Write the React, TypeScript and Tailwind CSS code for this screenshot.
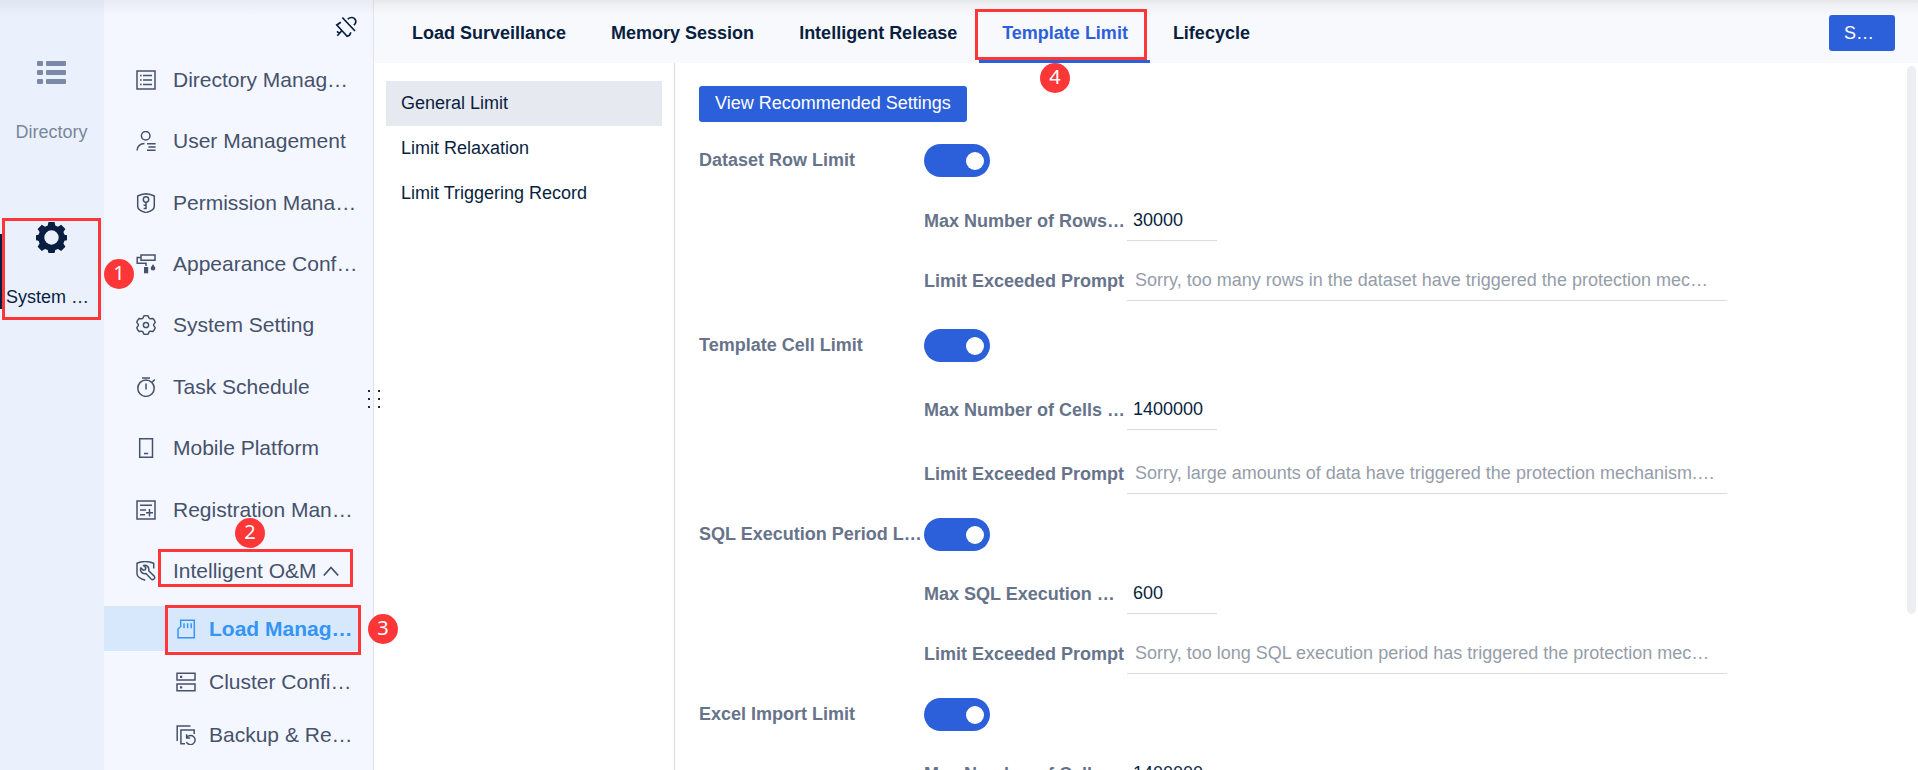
import { useState, type ReactNode } from "react";

type MenuItem = { label: string; icon: ReactNode };

const Icon = ({ children, className = "w-5 h-5" }: { children: ReactNode; className?: string }) => (
  <svg
    viewBox="0 0 20 20"
    className={`shrink-0 ${className}`}
    fill="none"
    stroke="currentColor"
    strokeWidth="1.5"
    aria-hidden="true"
  >
    {children}
  </svg>
);

const menu: MenuItem[] = [
  {
    label: "Directory Manag…",
    icon: (
      <Icon>
        <rect x="1" y="1" width="18" height="18" />
        <path d="M4 5.5h1.6M7 5.5h9M4 10h1.6M7 10h9M4 14.5h1.6M7 14.5h9" />
      </Icon>
    ),
  },
  {
    label: "User Management",
    icon: (
      <Icon>
        <circle cx="9.7" cy="4.8" r="4.3" />
        <path d="M1 19.6c0-4 3-7 7.5-7M11 12.7h8.6M12.4 16h7.2M11 19.2h8.6" />
      </Icon>
    ),
  },
  {
    label: "Permission Mana…",
    icon: (
      <Icon>
        <path d="M10 .8c3 .3 6 1.100 8.300 2.200v10.500c0 3-4.300 5-8.300 6.100-4-1.100-8.300-3.100-8.300-6.100V3C4 1.900 7 1.100 10 .8z" strokeLinejoin="round" />
        <circle cx="10" cy="6.500" r="2.700" />
        <path d="M10 9.200v7M10 12.200H7.600M10 15.500H7.600" />
      </Icon>
    ),
  },
  {
    label: "Appearance Conf…",
    icon: (
      <Icon>
        <path d="M5 1h14v5.200H5zM5 3.400H1.200v5.800H10V12" />
        <path d="M8 13h4.200v6.300H8z" fill="currentColor" stroke="none" />
        <path d="M17 10.200c1.400 2 2.300 3 2.300 4.100a2.300 2.300 0 0 1-4.600 0c0-1.100.9-2.100 2.300-4.100z" fill="currentColor" stroke="none" />
      </Icon>
    ),
  },
  {
    label: "System Setting",
    icon: (
      <Icon>
        <path
          d="M7.800 1q2.200-.8 4.400 0l.9 2.100q.5.800 1.600.7l2.300-.2q1.800 1.600 2.200 3.800l-1.300 1.700q-.6.900 0 1.800l1.300 1.700q-.4 2.200-2.200 3.800l-2.300-.2q-1.100-.1-1.600.7l-.9 2.100q-2.200.8-4.400 0l-.9-2.100q-.5-.8-1.600-.7l-2.300.2Q1.200 14.800.8 12.600l1.300-1.700q.6-.9 0-1.800L.8 7.400Q1.200 5.200 3 3.600l2.300.2q1.100.1 1.600-.7z"
          strokeLinejoin="round"
        />
        <circle cx="10" cy="10" r="2.600" />
      </Icon>
    ),
  },
  {
    label: "Task Schedule",
    icon: (
      <Icon>
        <circle cx="10" cy="11.200" r="8.200" />
        <path d="M6 .9h8M10 6.500v6M16.200 5l2.600-2.400" />
      </Icon>
    ),
  },
  {
    label: "Mobile Platform",
    icon: (
      <Icon>
        <path d="M3.700.8h12.800v18.400H3.700zM8 15.600h4.200" />
      </Icon>
    ),
  },
  {
    label: "Registration Man…",
    icon: (
      <Icon>
        <rect x="1" y="1" width="18" height="18" />
        <path d="M4 5.300h12M4 10h6M4 14.700h5M13.500 9v7.400M10 12.700h7" />
      </Icon>
    ),
  },
];

const subMenu: MenuItem[] = [
  {
    label: "Load Manag…",
    icon: (
      <Icon>
        <path d="M4.700 1.200h13.600v17.600H2V10l2.700-2.500zM8 4.200v5M11.600 4.200v5M15.200 4.200v5" />
      </Icon>
    ),
  },
  {
    label: "Cluster Confi…",
    icon: (
      <Icon>
        <path d="M1 1.200h18v6.900H1zM1 11.900h18v6.900H1z" />
        <path d="M4 3.700h2.200v2.200H4zM4 14.200h2.200v2.200H4z" fill="currentColor" stroke="none" />
      </Icon>
    ),
  },
  {
    label: "Backup & Re…",
    icon: (
      <Icon>
        <path d="M1.200 16V1h13.300M9 18.800H4.900V4.900h13.300V9" />
        <path d="M10.700 12.500a4.600 4.600 0 1 1-.3 4.500M10.600 9.300v3.700h3.600" />
      </Icon>
    ),
  },
];

const tabs = ["Load Surveillance", "Memory Session", "Intelligent Release", "Template Limit", "Lifecycle"];

const limitPages = ["General Limit", "Limit Relaxation", "Limit Triggering Record"];

const sections = [
  {
    title: "Dataset Row Limit",
    maxLabel: "Max Number of Rows…",
    max: "30000",
    prompt: "Sorry, too many rows in the dataset have triggered the protection mec…",
    fields: "mt-6 gap-5",
    space: "pb-7",
  },
  {
    title: "Template Cell Limit",
    maxLabel: "Max Number of Cells …",
    max: "1400000",
    prompt: "Sorry, large amounts of data have triggered the protection mechanism.…",
    fields: "mt-7 gap-6",
    space: "pb-6",
  },
  {
    title: "SQL Execution Period L…",
    maxLabel: "Max SQL Execution …",
    max: "600",
    prompt: "Sorry, too long SQL execution period has triggered the protection mec…",
    fields: "mt-[23px] gap-5",
    space: "pb-6",
  },
  {
    title: "Excel Import Limit",
    maxLabel: "Max Number of Cells …",
    max: "1400000",
    prompt: "Sorry, the imported Excel file has triggered the protection mechanism.",
    fields: "mt-[23px] gap-5",
    space: "pb-6",
  },
];

function Rail() {
  return (
    <nav className="w-[104px] shrink-0 bg-[#eaf1fd] pt-[57px] text-lg leading-6">
      <a href="#directory" className="flex flex-col items-center gap-8 pr-px text-[#7b8799]">
        <svg viewBox="0 0 31 31" className="w-[31px] h-[31px] text-[#7a89a5]" fill="currentColor" aria-hidden="true">
          <rect x="1" y="4" width="6" height="5" rx="1" />
          <rect x="10" y="4" width="20" height="5" rx="1" />
          <rect x="1" y="13" width="6" height="5" rx="1" />
          <rect x="10" y="13" width="20" height="5" rx="1" />
          <rect x="1" y="22" width="6" height="5" rx="1" />
          <rect x="10" y="22" width="20" height="5" rx="1" />
        </svg>
        Directory
      </a>
      <a href="#system" className="relative mt-[78px] flex flex-col gap-8 pr-px text-[#091e40]">
        <span className="absolute left-0 bottom-0 w-0.5 h-[75px] bg-[#091e40]" />
        <svg viewBox="0 0 31 31" className="w-[31px] h-[31px] self-center" fill="currentColor" aria-hidden="true">
          <path
            fillRule="evenodd"
            d="M12.500 0h6l.8 3.600 2.700 1.100 3.200-2 4.200 4.200-2 3.200 1.100 2.600 2.500.5v5l-2.500.6-1.100 2.800 2 3.200-4.200 4.200-3.200-2-2.700 1.100-.8 2.900h-6l-.8-2.900L9 27l-3.200 2-4.200-4.200 2-3.200-1.100-2.800L0 18.200v-5l2.500-.5 1.100-2.600-2-3.200 4.200-4.200 3.200 2 2.700-1.100zM15.500 8.300a7.200 7.200 0 1 0 0 14.400 7.200 7.200 0 0 0 0-14.400z"
          />
        </svg>
        <span className="pl-1.5">System …</span>
      </a>
    </nav>
  );
}

function Sidebar() {
  const row = "flex items-center gap-[17px] pl-8 text-left whitespace-nowrap";

  return (
    <aside className="relative w-[270px] shrink-0 bg-[#f4f7ff] border-r border-[#dfe3ee] text-[21px] leading-7 text-[#46526b]">
      <div className="h-[49px] flex justify-end pt-[15px] pr-3.5">
        <button aria-label="Unpin menu" className="w-6 h-6 text-[#091e40]">
          <svg viewBox="0 0 24 24" className="w-6 h-6" fill="none" stroke="currentColor" strokeWidth="1.700" aria-hidden="true">
            <path d="M7.300 2.500 20 16M5.800 7.200 1.800 10l10.300 11.300 2.300-.9 1.500-3.100M12.700 4.200c3-2.600 6.300-2 7.500.3 1.200 1.900.8 3.700-1.300 5.700M6.800 15.800l-4.500 5M2 16.300l2.600 2.300" />
          </svg>
        </button>
      </div>

      <ul className="grid auto-rows-fr h-[553px]">
        {menu.map((item) => (
          <li key={item.label} className="flex">
            <button className={`${row} flex-1`}>
              {item.icon}
              {item.label}
            </button>
          </li>
        ))}
        <li className="flex">
          <button aria-expanded="true" className={`${row} flex-1`}>
            <Icon>
              <path d="M17.700 7.600V2.300Q13 .5 9.200.6 5 .5 1 2.300v10.500q0 4 8.200 6.500" strokeLinejoin="round" />
              <path
                d="m7.500 4.500 2.400 2.300-.7 1.900-2 .5-2.300-2.500C3.600 9.500 5.500 13.500 10 12.600l5.100 5.400c2 1.700 4.700-.8 3.100-2.900l-5.500-5.300C13.600 6 10.500 3.500 7.500 4.500z"
                strokeLinejoin="round"
              />
            </Icon>
            <span className="flex items-center gap-1.5">
              Intelligent O&amp;M
              <svg viewBox="0 0 16 12" className="w-4 h-3" fill="none" stroke="currentColor" strokeWidth="1.800" aria-hidden="true">
                <path d="m.8 10.500 7.200-8 7.200 8" />
              </svg>
            </span>
          </button>
        </li>
      </ul>

      <ul className="mr-3.5">
        {subMenu.map((item, i) => (
          <li key={item.label} className="h-[53px] py-1 flex">
            <button
              className={`flex-1 flex items-center gap-[13px] pl-[72px] whitespace-nowrap ${i === 0 ? "bg-[#d7e8fd] text-[#3495f5] font-bold" : ""}`}
            >
              {item.icon}
              {item.label}
            </button>
          </li>
        ))}
      </ul>

      {/* resize handle */}
      <div className="absolute -right-[7px] top-[390px] z-10 grid grid-cols-2 gap-x-2 gap-y-1.5 cursor-col-resize">
        {[0, 1, 2, 3, 4, 5].map((n) => (
          <span key={n} className="w-0.5 h-0.5 bg-[#1c2b4a]" />
        ))}
      </div>
    </aside>
  );
}

function Switch({ id }: { id: string }) {
  const [on, setOn] = useState(true);

  return (
    <span className="relative w-[66px] h-[33px] shrink-0">
      <input
        id={id}
        type="checkbox"
        role="switch"
        checked={on}
        onChange={() => setOn(!on)}
        className="peer appearance-none block w-full h-full rounded-full bg-slate-300 checked:bg-[#2c60db] cursor-pointer"
      />
      <span className="absolute top-2 left-1.5 peer-checked:left-[42px] w-[18px] h-[18px] rounded-full bg-white pointer-events-none" />
    </span>
  );
}

function LimitSection({ section, index }: { section: (typeof sections)[number]; index: number }) {
  const label = "shrink-0 font-bold text-[#66738a] whitespace-nowrap";

  return (
    <section className={section.space}>
      <div className="flex items-center">
        <label htmlFor={`switch-${index}`} className={`w-[225px] pb-0.5 ${label}`}>
          {section.title}
        </label>
        <Switch id={`switch-${index}`} />
      </div>
      <div className={`ml-[225px] flex flex-col ${section.fields}`}>
        <div className="flex items-center">
          <label htmlFor={`max-${index}`} className={`w-[203px] ${label}`}>
            {section.maxLabel}
          </label>
          <input
            id={`max-${index}`}
            defaultValue={section.max}
            className="w-[90px] h-10 px-1.5 border-b border-[#d9dbe5] text-[#091e40] outline-none"
          />
        </div>
        <div className="flex items-center">
          <label htmlFor={`prompt-${index}`} className={`w-[203px] ${label}`}>
            Limit Exceeded Prompt
          </label>
          <input
            id={`prompt-${index}`}
            placeholder={section.prompt}
            className="flex-1 min-w-0 max-w-[600px] h-10 px-2 border-b border-[#d9dbe5] placeholder:text-[#959da9] outline-none"
          />
        </div>
      </div>
    </section>
  );
}

function Callout({ n, box, badge }: { n: number; box: string; badge: string }) {
  return (
    <>
      <div className={`absolute z-20 border-3 border-[#fd3737] pointer-events-none ${box}`} />
      <div
        className={`absolute z-20 w-[30px] h-[30px] rounded-full bg-[#fd3737] text-white text-xl leading-7 text-center font-['Noto_Sans',sans-serif] pointer-events-none ${badge}`}
      >
        {n}
      </div>
    </>
  );
}

export default function App() {
  const [tab, setTab] = useState("Template Limit");
  const [page, setPage] = useState("General Limit");

  return (
    <div className="relative flex h-screen overflow-hidden bg-white text-lg leading-6 text-[#091e40] font-['Liberation_Sans',Arial,sans-serif]">
      <Rail />
      <Sidebar />

      <main className="flex-1 min-w-0 flex flex-col">
        <header className="h-[63px] shrink-0 flex items-start justify-between bg-[#f8f9fd] border-t-3 border-[#f4f5f7] pl-[15px] pr-[23px]">
          <div role="tablist" className="flex h-full">
            {tabs.map((name) => (
              <button
                key={name}
                role="tab"
                aria-selected={name === tab}
                onClick={() => setTab(name)}
                className={`pl-[23px] pr-[22px] pt-0.5 font-bold whitespace-nowrap border-b-3 ${name === tab ? "text-[#2c60db] border-[#2c60db]" : "border-transparent"}`}
              >
                {name}
              </button>
            ))}
          </div>
          <button className="mt-3 w-[66px] h-9 pl-[15px] text-left rounded-[3px] bg-[#2c60db] text-white">S…</button>
        </header>

        <div className="flex-1 min-h-0 flex">
          <nav className="w-[301px] shrink-0 border-r border-[#d9dbe5] px-3 pt-[18px] flex flex-col">
            {limitPages.map((name) => (
              <button
                key={name}
                onClick={() => setPage(name)}
                className={`h-[45px] px-[15px] pb-0.5 text-left ${name === page ? "bg-[#e6e9f0]" : ""}`}
              >
                {name}
              </button>
            ))}
          </nav>

          <div className="flex-1 min-w-0 overflow-hidden pl-6 pt-[23px]">
            <button className="h-9 px-4 pb-0.5 mb-[22px] rounded-[3px] bg-[#2c60db] text-white">View Recommended Settings</button>
            {sections.map((section, i) => (
              <LimitSection key={section.title} section={section} index={i} />
            ))}
          </div>

          <div className="w-[11px] shrink-0 pt-[3px] pr-0.5">
            <div className="h-[548px] rounded-full bg-[#edeef2]" />
          </div>
        </div>
      </main>

      {/* shadow cast by the bar above */}
      <div className="absolute inset-x-0 top-0 h-4 bg-linear-to-b from-black/5 to-transparent pointer-events-none" />

      <Callout n={1} box="left-0.5 top-[218px] w-[99px] h-[102px]" badge="left-[104px] top-[259px]" />
      <Callout n={2} box="left-[158px] top-[549px] w-[195px] h-[38px]" badge="left-[235px] top-[518px]" />
      <Callout n={3} box="left-[165px] top-[605px] w-[196px] h-[50px]" badge="left-[368px] top-[614px]" />
      <Callout n={4} box="left-[975px] top-[9px] w-[172px] h-[51px]" badge="left-[1040px] top-[63px]" />
    </div>
  );
}
